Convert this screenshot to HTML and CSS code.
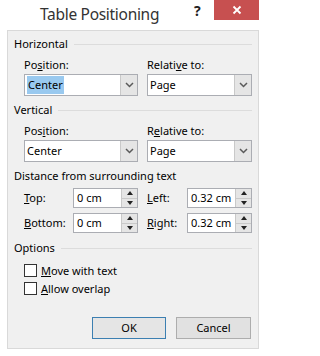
FILE: index.html
```html
<!DOCTYPE html>
<html>
<head>
<meta charset="utf-8">
<link rel="stylesheet" href="styles.css">
</head>
<body>
<div class="window">
  <div class="titlebar">
    <div class="title">Table Positioning</div>
    <div class="help">?</div>
    <div class="close"><svg width="10" height="10" viewBox="0 0 10 10"><path d="M1.5 1.5 L8.5 8.5 M8.5 1.5 L1.5 8.5" stroke="#fff" stroke-width="1.8" fill="none"/></svg></div>
  </div>
  <div class="panel">
    <div class="group-head g-first"><span>Horizontal</span><i class="rule"></i></div>
    <div class="pair">
      <div class="field">
        <div class="label">Po<u>s</u>ition:</div>
        <div class="combo"><span class="value"><span class="sel">Center</span></span><span class="drop"><svg width="9" height="6" viewBox="0 0 9 6"><path d="M1 1 L4.5 4.5 L8 1" stroke="#5a5a5a" stroke-width="1.5" fill="none"/></svg></span></div>
      </div>
      <div class="field">
        <div class="label">Relati<u>v</u>e to:</div>
        <div class="combo"><span class="value">Page</span><span class="drop"><svg width="9" height="6" viewBox="0 0 9 6"><path d="M1 1 L4.5 4.5 L8 1" stroke="#5a5a5a" stroke-width="1.5" fill="none"/></svg></span></div>
      </div>
    </div>

    <div class="group-head"><span>Vertical</span><i class="rule"></i></div>
    <div class="pair">
      <div class="field">
        <div class="label">Pos<u>i</u>tion:</div>
        <div class="combo c2"><span class="value">Center</span><span class="drop"><svg width="9" height="6" viewBox="0 0 9 6"><path d="M1 1 L4.5 4.5 L8 1" stroke="#5a5a5a" stroke-width="1.5" fill="none"/></svg></span></div>
      </div>
      <div class="field">
        <div class="label">R<u>e</u>lative to:</div>
        <div class="combo c2"><span class="value">Page</span><span class="drop"><svg width="9" height="6" viewBox="0 0 9 6"><path d="M1 1 L4.5 4.5 L8 1" stroke="#5a5a5a" stroke-width="1.5" fill="none"/></svg></span></div>
      </div>
    </div>

    <div class="group-head"><span>Distance from surrounding text</span><i class="rule none"></i></div>
    <div class="spin-grid">
      <div class="slabel"><u>T</u>op:</div>
      <div class="spin"><span class="value">0 cm</span><span class="btns"><span class="up"></span><span class="down"></span></span></div>
      <div class="slabel right"><u>L</u>eft:</div>
      <div class="spin"><span class="value">0.32 cm</span><span class="btns"><span class="up"></span><span class="down"></span></span></div>
      <div class="slabel"><u>B</u>ottom:</div>
      <div class="spin"><span class="value">0 cm</span><span class="btns"><span class="up"></span><span class="down"></span></span></div>
      <div class="slabel right"><u>R</u>ight:</div>
      <div class="spin"><span class="value">0.32 cm</span><span class="btns"><span class="up"></span><span class="down"></span></span></div>
    </div>

    <div class="group-head g-opt"><span>Options</span><i class="rule"></i></div>
    <div class="checks">
      <label class="check"><span class="box"></span><span><u>M</u>ove with text</span></label>
      <label class="check"><span class="box"></span><span><u>A</u>llow overlap</span></label>
    </div>

    <div class="buttons">
      <div class="btn default">OK</div>
      <div class="btn">Cancel</div>
    </div>
  </div>
</div>
</body>
</html>
```

FILE: styles.css
```css
html, body {
  margin: 0;
  padding: 0;
  background: #ffffff;
}
body {
  width: 266px;
  height: 356px;
  overflow: hidden;
  font-family: "Noto Sans", "Open Sans", sans-serif;
  font-size: 11px;
  color: #000;
}
.window {
  display: flex;
  flex-direction: column;
  height: 356px;
}
.titlebar {
  height: 30px;
  display: flex;
  align-items: flex-start;
}
.title {
  margin-left: 40px;
  margin-top: 3px;
  font-size: 15.5px;
  letter-spacing: -0.3px;
  line-height: 22px;
  color: #333;
  width: 150px;
}
.help {
  margin-left: 4px;
  margin-top: 2px;
  width: 13px;
  font-size: 14px;
  font-weight: bold;
  line-height: 18px;
  color: #222;
}
.close {
  margin-left: 7px;
  width: 45px;
  height: 20px;
  background: #c75050;
  display: flex;
  align-items: center;
  justify-content: center;
}
.close svg { display: block; }

.panel {
  margin-left: 7px;
  height: 317px;
  border: 1px solid #d9d9d9;
  background: #f0f0f0;
  padding: 0 6px 0 6px;
  box-sizing: content-box;
  width: 238px;
  display: flex;
  flex-direction: column;
}
.group-head {
  display: flex;
  align-items: center;
  height: 16px;
  line-height: 16px;
  margin-top: 6px;
  color: #000;
}
.g-first { margin-top: 5px; }
.group-head .rule {
  flex: 1;
  height: 1px;
  background: #dcdcdc;
  margin-left: 6px;
}
.group-head .rule.none { background: transparent; }

.pair {
  display: flex;
  margin-left: 10px;
  gap: 9px;
  margin-top: 5px;
}
.field:first-child { width: 114px; }
.field:last-child { width: 105px; }
.label {
  height: 16px;
  line-height: 16px;
  margin-bottom: 1px;
}
.combo {
  height: 22px;
  box-sizing: border-box;
  border: 1px solid #abadb3;
  background: #fff;
  display: flex;
}
.combo.c2 { margin-top: 1px; }
.combo .value {
  flex: 1;
  padding-left: 2px;
  line-height: 20px;
}
.sel {
  background: #99c9ef;
  padding: 1px 1px 2px 1px;
}
.drop {
  width: 16px;
  background: #e5e5e5;
  border-left: 1px solid #c9c9c9;
  display: flex;
  align-items: center;
  justify-content: center;
}
.drop svg { display: block; }

.spin-grid {
  display: grid;
  grid-template-columns: 49px 65px 49px 65px;
  row-gap: 5px;
  margin-left: 10px;
  margin-top: 4px;
}
.spin-grid .slabel {
  line-height: 20px;
}
.spin-grid .slabel.right { padding-left: 9px; }
.spin {
  height: 20px;
  box-sizing: border-box;
  border: 1px solid #abadb3;
  background: #fff;
  display: flex;
}
.spin .value {
  flex: 1;
  padding-left: 3px;
  line-height: 18px;
}
.btns {
  width: 15px;
  display: flex;
  flex-direction: column;
  border-left: 1px solid #c9c9c9;
  background: #e5e5e5;
}
.btns span {
  flex: 1;
  display: flex;
  align-items: center;
  justify-content: center;
}
.btns .up { border-bottom: 1px solid #c9c9c9; }
.btns .up::before {
  content: "";
  border-left: 3px solid transparent;
  border-right: 3px solid transparent;
  border-bottom: 4px solid #222;
}
.btns .down::before {
  content: "";
  border-left: 3px solid transparent;
  border-right: 3px solid transparent;
  border-top: 4px solid #222;
}

.g-opt { margin-top: 7px; }
.checks {
  margin-left: 10px;
  margin-top: 5px;
  display: flex;
  flex-direction: column;
}
.check {
  display: flex;
  align-items: center;
  height: 18px;
}
.box {
  width: 13px;
  height: 13px;
  box-sizing: border-box;
  border: 1px solid #333;
  background: #fff;
  margin-right: 4px;
}
.buttons {
  display: flex;
  justify-content: flex-end;
  gap: 10px;
  margin-top: 20px;
  margin-right: 1px;
}
.btn {
  width: 75px;
  height: 22px;
  box-sizing: border-box;
  border: 1px solid #adadad;
  background: #e1e1e1;
  text-align: center;
  line-height: 20px;
}
.btn.default {
  width: 74px;
  border-color: #3c7fb1;
  background: #e5e5e5;
}
```
